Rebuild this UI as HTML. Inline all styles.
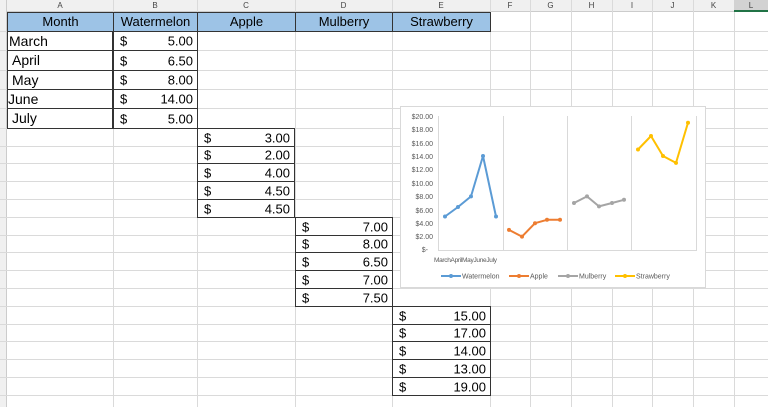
<!DOCTYPE html>
<html><head><meta charset="utf-8"><style>
body{margin:0;width:768px;height:407px;overflow:hidden;background:#fff;font-family:"Liberation Sans",sans-serif;position:relative}
.a{position:absolute;box-sizing:border-box}
.vl{position:absolute;top:0;width:1px;height:407px;background:#dadada}
.hl{position:absolute;left:0;width:768px;height:1px;background:#dadada}
.ch{position:absolute;top:0;height:12px;font-size:8px;color:#444;text-align:center;line-height:12px}
.c{position:absolute;box-sizing:border-box;border:1px solid #333;font-size:13px;color:#000;background:#fff}
.c .d{position:absolute;left:6px;top:50%;transform:translateY(-50%)}
.c .v{position:absolute;right:4px;top:50%;transform:translateY(-50%)}
.h{position:absolute;box-sizing:border-box;background:#9dc3e6;border:1px solid #333;font-size:13px;text-align:center;line-height:18px}
.m{position:absolute;left:7px;width:106px;font-size:14px;box-sizing:border-box;border:1px solid #333;background:#fff}
</style></head><body>
<div class="a" style="left:0;top:0;width:768px;height:12px;background:#f0f0f0;border-bottom:1px solid #ccc"></div>
<div class="a" style="left:0;top:0;width:7px;height:407px;background:#f0f0f0;border-right:1px solid #ccc"></div>
<div class="vl" style="left:113px"></div><div class="vl" style="left:197px"></div><div class="vl" style="left:295px"></div><div class="vl" style="left:392px"></div><div class="vl" style="left:490px"></div><div class="vl" style="left:530px"></div><div class="vl" style="left:571px"></div><div class="vl" style="left:612px"></div><div class="vl" style="left:652px"></div><div class="vl" style="left:693px"></div><div class="vl" style="left:734px"></div>
<div class="hl" style="top:31px"></div><div class="hl" style="top:50px"></div><div class="hl" style="top:70px"></div><div class="hl" style="top:89px"></div><div class="hl" style="top:108px"></div><div class="hl" style="top:128px"></div><div class="hl" style="top:146px"></div><div class="hl" style="top:163px"></div><div class="hl" style="top:181px"></div><div class="hl" style="top:199px"></div><div class="hl" style="top:217px"></div><div class="hl" style="top:235px"></div><div class="hl" style="top:252px"></div><div class="hl" style="top:270px"></div><div class="hl" style="top:288px"></div><div class="hl" style="top:306px"></div><div class="hl" style="top:324px"></div><div class="hl" style="top:341px"></div><div class="hl" style="top:359px"></div><div class="hl" style="top:377px"></div><div class="hl" style="top:395px"></div>
<div class="ch" style="left:7px;width:106px">A</div><div class="ch" style="left:113px;width:84px">B</div><div class="ch" style="left:197px;width:98px">C</div><div class="ch" style="left:295px;width:97px">D</div><div class="ch" style="left:392px;width:98px">E</div><div class="ch" style="left:490px;width:40px">F</div><div class="ch" style="left:530px;width:41px">G</div><div class="ch" style="left:571px;width:41px">H</div><div class="ch" style="left:612px;width:40px">I</div><div class="ch" style="left:652px;width:41px">J</div><div class="ch" style="left:693px;width:41px">K</div><div class="ch" style="left:734px;width:34px;border-bottom:2px solid #217346;height:12px;box-sizing:border-box;background:#d2d2d2">L</div>
<div class="h" style="left:7px;top:12px;width:107px;height:20px">Month</div>
<div class="h" style="left:113px;top:12px;width:85px;height:20px">Watermelon</div>
<div class="h" style="left:197px;top:12px;width:99px;height:20px">Apple</div>
<div class="h" style="left:295px;top:12px;width:98px;height:20px">Mulberry</div>
<div class="h" style="left:392px;top:12px;width:99px;height:20px">Strawberry</div>
<div class="m" style="top:31px;height:20px;line-height:18px;padding-left:1px">March</div>
<div class="m" style="top:50px;height:21px;line-height:19px;padding-left:4px">April</div>
<div class="m" style="top:70px;height:20px;line-height:18px;padding-left:4px">May</div>
<div class="m" style="top:89px;height:20px;line-height:18px;padding-left:0">June</div>
<div class="m" style="top:108px;height:21px;line-height:19px;padding-left:4px">July</div>
<div class="c" style="left:113px;top:31px;width:85px;height:20px"><span class="d">$</span><span class="v">5.00</span></div>
<div class="c" style="left:113px;top:50px;width:85px;height:21px"><span class="d">$</span><span class="v">6.50</span></div>
<div class="c" style="left:113px;top:70px;width:85px;height:20px"><span class="d">$</span><span class="v">8.00</span></div>
<div class="c" style="left:113px;top:89px;width:85px;height:20px"><span class="d">$</span><span class="v">14.00</span></div>
<div class="c" style="left:113px;top:108px;width:85px;height:21px"><span class="d">$</span><span class="v">5.00</span></div>
<div class="c" style="left:197px;top:128px;width:98px;height:19px"><span class="d">$</span><span class="v">3.00</span></div>
<div class="c" style="left:197px;top:146px;width:98px;height:18px"><span class="d">$</span><span class="v">2.00</span></div>
<div class="c" style="left:197px;top:163px;width:98px;height:19px"><span class="d">$</span><span class="v">4.00</span></div>
<div class="c" style="left:197px;top:181px;width:98px;height:19px"><span class="d">$</span><span class="v">4.50</span></div>
<div class="c" style="left:197px;top:199px;width:98px;height:19px"><span class="d">$</span><span class="v">4.50</span></div>
<div class="c" style="left:295px;top:217px;width:98px;height:19px"><span class="d">$</span><span class="v">7.00</span></div>
<div class="c" style="left:295px;top:235px;width:98px;height:18px"><span class="d">$</span><span class="v">8.00</span></div>
<div class="c" style="left:295px;top:252px;width:98px;height:19px"><span class="d">$</span><span class="v">6.50</span></div>
<div class="c" style="left:295px;top:270px;width:98px;height:19px"><span class="d">$</span><span class="v">7.00</span></div>
<div class="c" style="left:295px;top:288px;width:98px;height:19px"><span class="d">$</span><span class="v">7.50</span></div>
<div class="c" style="left:392px;top:306px;width:99px;height:19px"><span class="d">$</span><span class="v">15.00</span></div>
<div class="c" style="left:392px;top:324px;width:99px;height:18px"><span class="d">$</span><span class="v">17.00</span></div>
<div class="c" style="left:392px;top:341px;width:99px;height:19px"><span class="d">$</span><span class="v">14.00</span></div>
<div class="c" style="left:392px;top:359px;width:99px;height:19px"><span class="d">$</span><span class="v">13.00</span></div>
<div class="c" style="left:392px;top:377px;width:99px;height:19px"><span class="d">$</span><span class="v">19.00</span></div>
<svg class="a" style="left:400px;top:106px" width="306" height="182" viewBox="400 106 306 182" font-family="Liberation Sans" font-size="7" fill="#595959">
<rect x="400.5" y="106.5" width="305" height="181" fill="#fff" stroke="#d9d9d9"/>
<g stroke="#d9d9d9" stroke-width="1"><line x1="438.5" y1="116" x2="438.5" y2="250"/><line x1="503.5" y1="116" x2="503.5" y2="250"/><line x1="567.5" y1="116" x2="567.5" y2="250"/><line x1="631.5" y1="116" x2="631.5" y2="250"/><line x1="696.5" y1="116" x2="696.5" y2="250"/><line x1="438" y1="250.5" x2="697" y2="250.5"/></g>
<g text-anchor="end"><text x="433" y="119">$20.00</text><text x="433" y="132">$18.00</text><text x="433" y="146">$16.00</text><text x="433" y="159">$14.00</text><text x="433" y="172">$12.00</text><text x="433" y="186">$10.00</text><text x="433" y="199">$8.00</text><text x="433" y="213">$6.00</text><text x="433" y="226">$4.00</text><text x="433" y="239">$2.00</text><text x="428" y="252">$-</text></g>
<text x="434" y="262" font-size="6.5" letter-spacing="-0.3">MarchAprilMayJuneJuly</text>
<g fill="none" stroke-width="2" stroke-linejoin="round">
<polyline stroke="#5b9bd5" points="445,216.5 458,207 471,196.4 483,156 496,216.5"/>
<polyline stroke="#ed7d31" points="509,229.9 522,236.6 535,223.2 547,219.8 560,219.8"/>
<polyline stroke="#a5a5a5" points="574,203 587,196.4 599,206.4 612,203 624,199.8"/>
<polyline stroke="#ffc000" points="638,149.5 651,136 663,156 676,162.9 688,122.7"/>
</g>
<g fill="#5b9bd5"><circle cx="445" cy="216.5" r="2"/><circle cx="458" cy="207" r="2"/><circle cx="471" cy="196.4" r="2"/><circle cx="483" cy="156" r="2"/><circle cx="496" cy="216.5" r="2"/></g>
<g fill="#ed7d31"><circle cx="509" cy="229.9" r="2"/><circle cx="522" cy="236.6" r="2"/><circle cx="535" cy="223.2" r="2"/><circle cx="547" cy="219.8" r="2"/><circle cx="560" cy="219.8" r="2"/></g>
<g fill="#a5a5a5"><circle cx="574" cy="203" r="2"/><circle cx="587" cy="196.4" r="2"/><circle cx="599" cy="206.4" r="2"/><circle cx="612" cy="203" r="2"/><circle cx="624" cy="199.8" r="2"/></g>
<g fill="#ffc000"><circle cx="638" cy="149.5" r="2"/><circle cx="651" cy="136" r="2"/><circle cx="663" cy="156" r="2"/><circle cx="676" cy="162.9" r="2"/><circle cx="688" cy="122.7" r="2"/></g>
<g stroke-width="2"><line x1="441" y1="276" x2="461" y2="276" stroke="#5b9bd5"/><line x1="509" y1="276" x2="529" y2="276" stroke="#ed7d31"/><line x1="558" y1="276" x2="578" y2="276" stroke="#a5a5a5"/><line x1="615" y1="276" x2="635" y2="276" stroke="#ffc000"/></g>
<circle cx="451" cy="276" r="2" fill="#5b9bd5"/><circle cx="519" cy="276" r="2" fill="#ed7d31"/><circle cx="568" cy="276" r="2" fill="#a5a5a5"/><circle cx="625" cy="276" r="2" fill="#ffc000"/>
<text x="462" y="278.5">Watermelon</text><text x="530" y="278.5">Apple</text><text x="579" y="278.5">Mulberry</text><text x="636" y="278.5">Strawberry</text>
</svg>
</body></html>
